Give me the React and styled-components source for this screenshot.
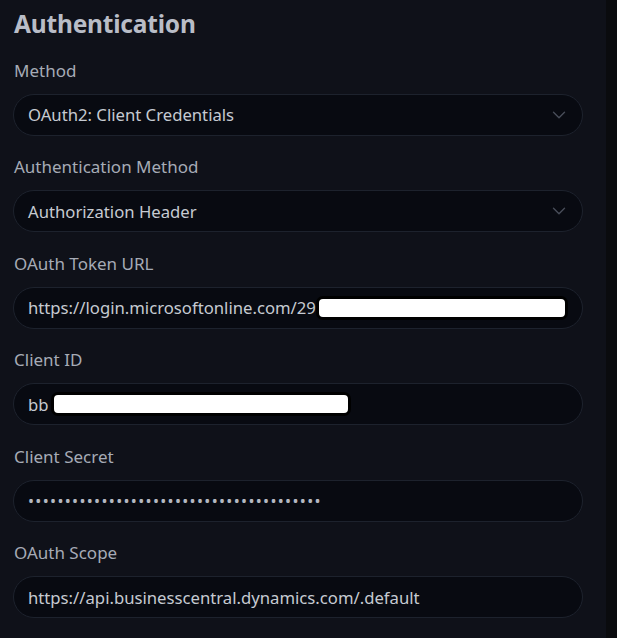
import React from "react";
import styled, { createGlobalStyle } from "styled-components";
import { ChevronDown } from "lucide-react";

const GlobalStyle = createGlobalStyle`
  html, body {
    margin: 0;
    padding: 0;
    background: #0f1119;
  }
  body {
    font-family: "Noto Sans", "Open Sans", sans-serif;
  }
`;

const Page = styled.div`
  display: flex;
  width: 617px;
  height: 638px;
  overflow: hidden;
`;

const Panel = styled.section`
  flex: 1;
  background: #0f1119;
  padding: 6px 23px 0 13px;
  display: flex;
  flex-direction: column;
  gap: 19.5px;
`;

const Track = styled.div`
  width: 11px;
  background: #0a0b0e;
`;

const Title = styled.h2`
  margin: 0;
  padding: 2px 0 0 1px;
  font-size: 24.5px;
  line-height: 31px;
  font-weight: 700;
  color: #b9bdc7;
  letter-spacing: -0.2px;
`;

const Field = styled.div`
  display: flex;
  flex-direction: column;
  gap: 11px;
`;

const Label = styled.label`
  font-size: 17px;
  line-height: 24px;
  color: #a6abb6;
  padding-left: 1px;
`;

const Control = styled.div`
  position: relative;
  height: 42px;
  box-sizing: border-box;
  border: 1px solid #1d222d;
  border-radius: 21px;
  background: #080a11;
  display: flex;
  align-items: center;
  padding: 0 ${(p) => (p.$select ? "40px" : "14px")} 0 14px;
  color: #c6cad2;
  font-size: 16.7px;
  white-space: nowrap;
  overflow: hidden;
`;

const Chevron = styled(ChevronDown)`
  position: absolute;
  right: 12px;
  top: 50%;
  transform: translateY(-50%);
  color: #474c58;
`;

const Redacted = styled.span`
  display: inline-block;
  height: 24px;
  width: ${(p) => p.$w}px;
  margin-left: ${(p) => p.$gap}px;
  background: #ffffff;
  border: 3px solid #000;
  border-radius: 7px;
  box-sizing: border-box;
`;

const Dots = styled.span`
  font-size: 16px;
  letter-spacing: 1.33px;
  color: #b4b8c1;
`;

const fields = [
  { label: "Method", value: "OAuth2: Client Credentials", select: true },
  { label: "Authentication Method", value: "Authorization Header", select: true },
  { label: "OAuth Token URL", value: "https://login.microsoftonline.com/29", redact: { w: 252, gap: 0 } },
  { label: "Client ID", value: "bb", redact: { w: 300, gap: 2 } },
  { label: "Client Secret", secret: 40 },
  { label: "OAuth Scope", value: "https://api.businesscentral.dynamics.com/.default" },
];

export default function App() {
  return (
    <>
      <GlobalStyle />
      <Page>
        <Panel>
          <Title>Authentication</Title>
          {fields.map((f) => (
            <Field key={f.label}>
              <Label>{f.label}</Label>
              <Control $select={f.select}>
                {f.secret ? <Dots>{"•".repeat(f.secret)}</Dots> : f.value}
                {f.redact && <Redacted $w={f.redact.w} $gap={f.redact.gap} />}
                {f.select && <Chevron size={22} strokeWidth={1.5} />}
              </Control>
            </Field>
          ))}
        </Panel>
        <Track />
      </Page>
    </>
  );
}
